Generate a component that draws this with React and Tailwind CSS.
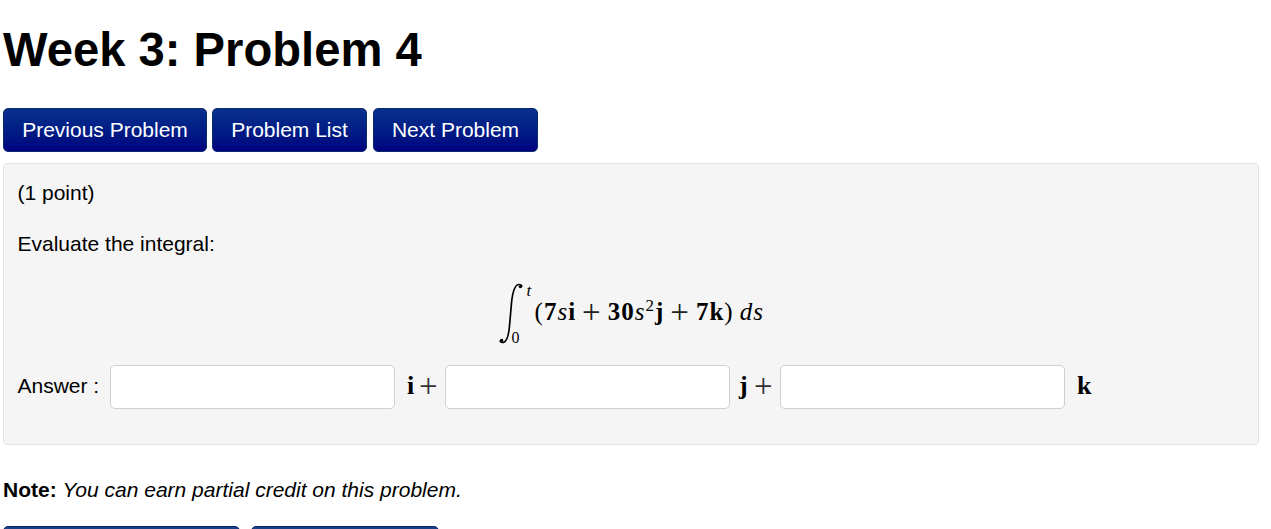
const navButtons = ['Previous Problem', 'Problem List', 'Next Problem'];
const serif = "font-['Liberation_Serif',serif]";

function NavButton({ label, className }) {
    return (
        <a className={`flex h-[44px] items-center justify-center rounded-[5px] border border-[#0a2a6e] bg-gradient-to-b from-[#0b2f8c] to-[#00007f] text-white ${className}`}>
            {label}
        </a>
    );
}

function Plus({ className }) {
    return <span className={`text-[33px] font-thin leading-none text-[#222] ${className}`}>+</span>;
}

function Formula() {
    return (
        <div className={`mt-[17px] flex h-[72px] items-center justify-center text-[25px] text-black ${serif}`}>
            <div className="relative h-[72px] w-[36px]">
                <svg viewBox="0 0 36 72" className="absolute inset-0 h-full w-full" fill="none" stroke="#000">
                    <path d="M13.5 27 C14.8 14 17 8.5 21 8.5 C22.5 8.5 23.7 9.2 24 10.5 M13.5 27 L11.5 50 C10.5 61 8 66.5 4.5 66.5 C3.2 66.5 2.3 65.8 2 64.5" strokeWidth="1.7" />
                    <circle cx="22.4" cy="10.6" r="1.7" fill="#000" stroke="none" />
                    <circle cx="3.6" cy="64.4" r="1.7" fill="#000" stroke="none" />
                </svg>
                <span className="absolute left-[29px] top-[6px] text-[17px] italic leading-none">t</span>
                <span className="absolute left-[14px] top-[54px] text-[16px] leading-none">0</span>
            </div>
            <span className="whitespace-pre pl-[1px] tracking-[1px]">
                (<b>7</b><i>s</i><b>i</b>
                <Plus className="mx-[6px] align-[-3px]" />
                <b>30</b><i>s</i><sup className="text-[17px] leading-none">2</sup><b>j</b>
                <Plus className="mx-[6px] align-[-3px]" />
                <b>7k</b>)
                <i className="ml-[6px]">ds</i>
            </span>
        </div>
    );
}

function AnswerInput() {
    return <input type="text" className="h-[44px] w-[285px] rounded-[5px] border border-[#cfcfcf] bg-white" />;
}

function UnitVector({ letter, plus, letterClass = '' }) {
    return (
        <span className={`flex w-[50px] items-center pb-[3px] pl-[12px] text-[26px] text-black ${serif}`}>
            <b className={`w-[12px] ${letterClass}`}>{letter}</b>
            {plus && <Plus className="pt-[2px] text-[#333]" />}
        </span>
    );
}

export default function App() {
    return (
        <div className="h-[529px] overflow-hidden bg-white pl-[3px] pr-[12px] font-['Liberation_Sans',Arial,sans-serif] text-[21px] leading-[30px] text-black">
            <h1 className="flex h-[108px] items-start pt-[23px] text-[47.2px] font-bold leading-[54px]">Week 3: Problem 4</h1>

            <nav className="flex">
                <NavButton label={navButtons[0]} className="w-[204px]" />
                <NavButton label={navButtons[1]} className="ml-[5px] w-[155px]" />
                <NavButton label={navButtons[2]} className="ml-[6px] w-[165px]" />
            </nav>

            <section className="mt-[11px] h-[282px] rounded-[4px] border border-[#e3e3e3] bg-[#f5f5f5] pl-[13.5px] pr-[14px] pt-[14px]">
                <p className="h-[30px]">(1 point)</p>
                <p className="mt-[21px] h-[30px]">Evaluate the integral:</p>
                <Formula />
                <div className="mt-[17px] flex items-center">
                    <span className="w-[92.5px] pb-[3px]">Answer :</span>
                    <AnswerInput />
                    <UnitVector letter="i" plus />
                    <AnswerInput />
                    <UnitVector letter="j" plus letterClass="-ml-[3px] mr-[3px]" />
                    <AnswerInput />
                    <UnitVector letter="k" />
                </div>
            </section>

            <p className="mt-[30px]">
                <b>Note:</b> <i>You can earn partial credit on this problem.</i>
            </p>

            <div className="mt-[21px] flex gap-[11px]">
                <div className="h-[44px] w-[237px] rounded-[5px] border border-[#0a2a6e] bg-[#1a3f87]" />
                <div className="h-[44px] w-[188px] rounded-[5px] border border-[#0a2a6e] bg-[#1a3f87]" />
            </div>
        </div>
    );
}
